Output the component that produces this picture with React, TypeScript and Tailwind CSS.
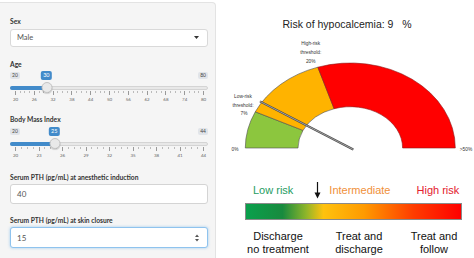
import React from "react";

type SliderProps = {
  min: number;
  max: number;
  value: number;
  step: number;
  minors: number;
};

// ion.rangeslider-like control, 198px wide
function Slider({ min, max, value, step, minors }: SliderProps) {
  const start = 5;
  const end = 193;
  const pos = (v: number) => start + ((v - min) / (max - min)) * (end - start);

  const majors: number[] = [];
  for (let v = min; v <= max; v += step) majors.push(v);
  const small: number[] = [];
  majors.slice(0, -1).forEach((v) => {
    for (let k = 1; k <= minors; k++) small.push(v + (step * k) / (minors + 1));
  });

  return (
    <div className="relative h-[32px] w-[198px]">
      <span className="absolute left-0 top-[1px] rounded-[2px] bg-[#e1e4e9] px-[2px] text-[5px] leading-[7px] text-[#444]">
        {min}
      </span>
      <span className="absolute right-0 top-[1px] rounded-[2px] bg-[#e1e4e9] px-[2px] text-[5px] leading-[7px] text-[#444]">
        {max}
      </span>
      <span
        className="absolute top-0 -translate-x-1/2 rounded-[2px] bg-[#428bca] px-[2px] text-[5.5px] leading-[9px] text-white"
        style={{ left: pos(value) }}
      >
        {value}
      </span>
      <div className="absolute left-0 right-0 top-[14.5px] h-[4px] rounded-full border border-[#d4d4d4] bg-[#e8e8e8]" />
      <div
        className="absolute left-0 top-[14.5px] h-[4px] rounded-l-full bg-[#428bca]"
        style={{ width: pos(value) }}
      />
      {majors.map((v) => (
        <div
          key={"M" + v}
          className="absolute top-[19.5px] h-[4px] w-px bg-[#999]"
          style={{ left: pos(v) }}
        />
      ))}
      {small.map((v, i) => (
        <div
          key={"m" + i}
          className="absolute top-[19.5px] h-[2px] w-px bg-[#bbb]"
          style={{ left: pos(v) }}
        />
      ))}
      {majors.map((v) => (
        <span
          key={"L" + v}
          className="absolute top-[25.5px] -translate-x-1/2 text-[4.5px] leading-[6px] text-[#666]"
          style={{ left: pos(v) + 0.5 }}
        >
          {v}
        </span>
      ))}
      <div
        className="absolute top-[11px] h-[11px] w-[11px] -translate-x-1/2 rounded-full border border-[#c4c4c4] bg-[#e9e9e9] shadow-[0_1px_1px_rgba(0,0,0,0.15)]"
        style={{ left: pos(value) + 0.5 }}
      />
    </div>
  );
}

function Gauge() {
  const cx = 130.3;
  const cy = 118;
  const R = [105, 85];
  const r = [52.3, 41.3];
  const rad = (pct: number) => (pct / 50) * Math.PI;
  const pt = (t: number, a: number[]) =>
    `${(cx - a[0] * Math.cos(t)).toFixed(2)} ${(cy - a[1] * Math.sin(t)).toFixed(2)}`;
  const seg = (p1: number, p2: number) => {
    const t1 = rad(p1);
    const t2 = rad(p2);
    return `M ${pt(t1, R)} A ${R[0]} ${R[1]} 0 0 1 ${pt(t2, R)} L ${pt(t2, r)} A ${r[0]} ${r[1]} 0 0 0 ${pt(t1, r)} Z`;
  };
  const tn = rad(9);
  const nx = cx - 107 * Math.cos(tn);
  const ny = cy - 87 * Math.sin(tn);

  return (
    <svg width="254" height="128" className="block">
      <path d={seg(0, 7)} fill="#8cc63e" stroke="#4d4d4d" strokeWidth="0.6" />
      <path d={seg(7, 20)} fill="#ffb300" stroke="#4d4d4d" strokeWidth="0.6" />
      <path d={seg(20, 50)} fill="#ff0000" stroke="#8a1a1a" strokeWidth="0.6" />
      <line x1={nx} y1={ny} x2={cx + 3} y2={cy + 1.5} stroke="#4a4a4a" strokeWidth="2.2" />
      <line x1={nx} y1={ny} x2={cx + 3} y2={cy + 1.5} stroke="#a8a8a8" strokeWidth="0.9" />
      <g fontFamily="'Liberation Sans', Arial, sans-serif" fontSize="4.8" fill="#333" textAnchor="middle">
        <text x="23" y="68">Low-risk</text>
        <text x="23" y="76.6">threshold:</text>
        <text x="24" y="85">7%</text>
        <text x="90.7" y="15">High-risk</text>
        <text x="90.7" y="24">threshold:</text>
        <text x="90.7" y="32.7">20%</text>
        <text x="15" y="120.7">0%</text>
        <text x="246" y="120.7">&gt;50%</text>
      </g>
    </svg>
  );
}

export default function App() {
  const label =
    "block text-[6.7px] leading-[8px] font-bold text-[#333]";

  return (
    <div className="flex h-[258px] w-[474px] overflow-hidden bg-white font-['Lato','Liberation_Sans',sans-serif]">
      {/* inputs panel */}
      <div className="mt-[2px] w-[216px] shrink-0 rounded-tr-[4px] border-r border-t border-[#e3e3e3] bg-[#f5f5f5] pl-[10px] pt-[14px]">
        <span className={label}>Sex</span>
        <div className="mt-[3.7px] flex h-[18px] w-[198px] items-center justify-between rounded-[3px] border border-[#d9d9d9] bg-white pl-[6px] pr-[8px]">
          <span className="text-[7.5px] text-[#555]">Male</span>
          <svg width="5" height="3" viewBox="0 0 5 3">
            <path d="M0 0 L5 0 L2.5 3 Z" fill="#333" />
          </svg>
        </div>

        <span className={label + " mt-[13.3px]"}>Age</span>
        <div className="mt-[3.2px]">
          <Slider min={20} max={80} value={30} step={6} minors={3} />
        </div>

        <span className={label + " mt-[11.8px]"}>Body Mass Index</span>
        <div className="mt-[4.2px]">
          <Slider min={20} max={44} value={25} step={3} minors={3} />
        </div>

        <span className={label + " mt-[13.5px]"}>Serum PTH (pg/mL) at anesthetic induction</span>
        <div className="mt-[3.5px] flex h-[20px] w-[198px] items-center rounded-[3px] border border-[#d4d4d4] bg-white pl-[6px]">
          <span className="text-[8px] text-[#555]">40</span>
        </div>

        <span className={label + " mt-[11.5px]"}>Serum PTH (pg/mL) at skin closure</span>
        <div className="mt-[3.5px] flex h-[21px] w-[198px] items-center justify-between rounded-[3px] border border-[#8fc3ee] bg-white pl-[6px] pr-[8px] shadow-[0_0_3px_rgba(102,175,233,0.6)]">
          <span className="text-[8px] text-[#555]">15</span>
          <svg width="4" height="8" viewBox="0 0 4 8">
            <path d="M0 3 L4 3 L2 0.5 Z M0 5 L4 5 L2 7.5 Z" fill="#555" />
          </svg>
        </div>
      </div>

      {/* result area */}
      <div className="ml-[4px] flex w-[254px] flex-col font-['Liberation_Sans',Arial,sans-serif]">
        <div className="h-[30px] whitespace-pre pt-[18px] text-center text-[10.5px] leading-[12px] text-[#222]">
          Risk of hypocalcemia: 9   %
        </div>
        <Gauge />

        <div className="mt-[24px] flex h-[16px] items-center pl-[33px] text-[11px] leading-[13px]">
          <span className="text-[#1f9d62]">Low risk</span>
          <svg width="7" height="17" viewBox="0 0 7 17" className="ml-[21px]">
            <line x1="3.5" y1="0" x2="3.5" y2="12" stroke="#111" strokeWidth="1.2" />
            <path d="M0.5 10.5 L6.5 10.5 L3.5 16.5 Z" fill="#111" />
          </svg>
          <span className="ml-[8px] text-[#f0903a]">Intermediate</span>
          <span className="ml-[26px] text-[#e3202c]">High risk</span>
        </div>

        <div className="ml-[25px] mt-[5px] h-[17px] w-[217px] border border-[#8a8a8a] bg-[linear-gradient(to_right,#0aa04c_0%,#188a3e_17%,#8fb52a_28%,#ffc20e_36%,#ff9a00_55%,#ff3c00_78%,#ff0000_100%)]" />

        <div className="mt-[9.5px] flex pl-[18px] text-[11px] leading-[13px] text-[#111]">
          <div className="w-[80px] text-center">
            Discharge
            <br />
            no treatment
          </div>
          <div className="w-[82px] text-center">
            Treat and
            <br />
            discharge
          </div>
          <div className="w-[68px] text-center">
            Treat and
            <br />
            follow
          </div>
        </div>
      </div>
    </div>
  );
}
